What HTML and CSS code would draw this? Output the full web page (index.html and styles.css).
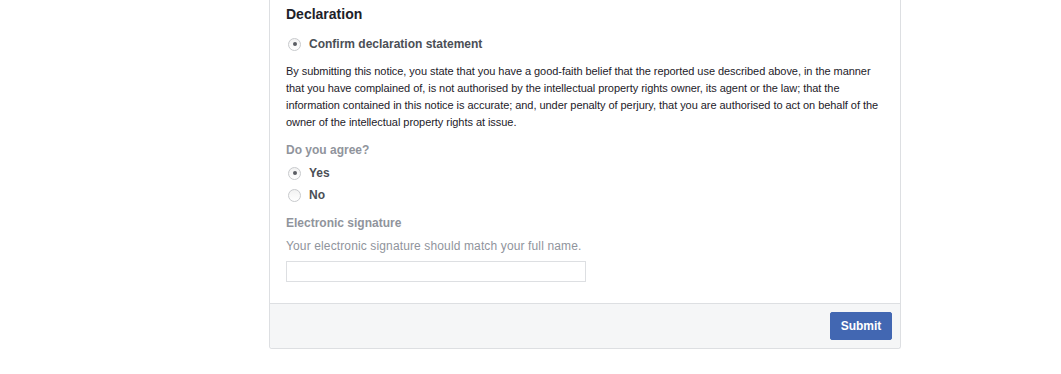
FILE: index.html
```html
<!DOCTYPE html>
<html>
<head>
<meta charset="utf-8">
<link rel="stylesheet" href="styles.css">
</head>
<body>
<div class="page">
  <div class="card">
    <div class="body">
      <h2 class="title">Declaration</h2>
      <label class="radio-row strong"><span class="radio checked"></span>Confirm declaration statement</label>
      <p class="statement">By submitting this notice, you state that you have a good-faith belief that the reported use described above, in the manner that you have complained of, is not authorised by the intellectual property rights owner, its agent or the law; that the information contained in this notice is accurate; and, under penalty of perjury, that you are authorised to act on behalf of the owner of the intellectual property rights at issue.</p>
      <div class="field-label">Do you agree?</div>
      <div class="options">
        <label class="radio-row"><span class="radio checked"></span>Yes</label>
        <label class="radio-row"><span class="radio"></span>No</label>
      </div>
      <div class="field-label sig">Electronic signature</div>
      <div class="hint">Your electronic signature should match your full name.</div>
      <div class="input"></div>
    </div>
    <div class="footer">
      <button class="submit">Submit</button>
    </div>
  </div>
</div>
</body>
</html>
```
FILE: styles.css
```css
html, body { margin: 0; padding: 0; background: #fff; }
body { font-family: "Liberation Sans", Arial, sans-serif; color: #1d2129; }
.page { padding-left: 269px; }
.card {
  width: 630px;
  border: 1px solid #dddfe2;
  border-top: none;
  border-radius: 0 0 3px 3px;
  background: #fff;
}
.body { padding: 5px 16px 21px 16px; }
.title { margin: 0; font-size: 14px; font-weight: bold; line-height: 18px; color: #1d2129; }
.radio-row {
  display: flex; align-items: center;
  font-size: 12px; font-weight: bold; color: #4b4f56;
  height: 22px;
}
.radio-row.strong { margin-top: 10px; }
.radio {
  box-sizing: border-box;
  width: 13px; height: 13px; border-radius: 50%;
  border: 1px solid #c8cacd;
  background: linear-gradient(#f2f2f2, #fff);
  margin: 0 8px 0 2px;
  position: relative;
}
.radio.checked::after {
  content: ""; position: absolute; left: 3.5px; top: 3.5px;
  width: 4px; height: 4px; border-radius: 50%; background: #5a5d63;
}
.statement { margin: 8px 0 0; font-size: 11px; line-height: 17px; letter-spacing: -0.05px; color: #1d2129; }
.field-label { margin-top: 11px; font-size: 12px; font-weight: bold; color: #90949c; line-height: 16px; }
.options { margin-top: 4px; }
.field-label.sig { margin-top: 9px; }
.hint { margin-top: 7px; font-size: 12px; color: #90949c; line-height: 16px; letter-spacing: 0.13px; }
.input {
  margin-top: 7px;
  box-sizing: border-box;
  width: 300px; height: 21px;
  border: 1px solid #dddfe2;
}
.footer {
  background: #f5f6f7;
  border-top: 1px solid #dddfe2;
  padding: 8px 8px 8px 0;
  display: flex; justify-content: flex-end;
  border-radius: 0 0 3px 3px;
}
.submit {
  font-family: "Liberation Sans", Arial, sans-serif;
  background: #4267b2; border: 1px solid #4267b2; color: #fff;
  font-size: 12px; font-weight: bold;
  width: 62px; height: 28px; border-radius: 2px; padding: 0;
}
```
